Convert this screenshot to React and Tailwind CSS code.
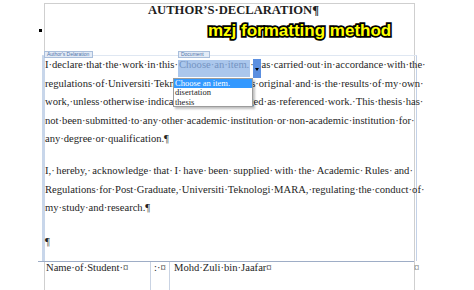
import React from "react";

function words(t) {
  return t.match(/·?[^·]+·?/g);
}

function JLine({ text }) {
  return (
    <div className="flex justify-between whitespace-pre">
      {words(text).map((p, i) => (
        <span key={i}>{p}</span>
      ))}
    </div>
  );
}

function Control() {
  return (
    <span className="relative px-[1px]">
      <span className="absolute left-0 right-0 top-[4px] h-[17px] bg-[#abc7ec]" />
      <span className="absolute left-0 top-[-5px] h-[7px] w-[32px] border border-[#a9bedb] bg-[#e3ebf6] font-['Liberation_Sans',sans-serif] text-[5px] leading-[5px] text-[#4f73aa] pl-[2px]">
        Document
      </span>
      <span className="relative text-[#7594c2]">Choose·an·item.</span>
      <span className="absolute left-[calc(100%+3px)] top-[3px] w-[8px] h-[19px] bg-[#5b8fe0] flex items-center justify-center">
        <span className="block w-0 h-0 border-l-[2.5px] border-r-[2.5px] border-t-[3px] border-l-transparent border-r-transparent border-t-black mt-[1px]" />
      </span>
    </span>
  );
}

export default function App() {
  const l1a = "I·declare·that·the·work·in·this·";
  const l1b = ["·was·", "carried·", "out·", "in·", "accordance·", "with·", "the·"];
  return (
    <div className="relative w-[474px] h-[290px] overflow-hidden bg-white font-['Liberation_Serif',serif] text-[#1e1e1e]">
      <div className="ml-[44px] mt-[3px] w-[371px] h-[287px] border-l border-t border-r border-[#cfcfcf] flex flex-col">
        <div className="h-[12px] leading-[12px] text-[12.6px] font-bold pl-[103px] whitespace-pre">
          AUTHOR’S·DECLARATION¶
        </div>
        <div className="h-[39px] pt-[13px]">
          <div className="-ml-[6px] w-[3px] h-[3px] bg-black" />
        </div>

        <div className="relative -ml-[3px] -mr-[3px] pr-[3px] h-[206px] border-l-[3px] border-l-[#c8d6ea] border-t border-t-[#dfe7f2] border-r border-r-[#c3d1e7] text-[10.6px] leading-[18.6px]">
          <span className="absolute left-[-1px] top-[-5px] h-[7px] w-[49px] border border-[#a9bedb] bg-[#e3ebf6] font-['Liberation_Sans',sans-serif] text-[5px] leading-[5px] text-[#4f73aa] pl-[2px] whitespace-nowrap">
            Author's Delaration
          </span>

          <div className="mb-[13px]">
            <div className="flex justify-between whitespace-pre">
              <span>{l1a}</span>
              <Control />
              {l1b.map((w, i) => (
                <span key={i}>{w}</span>
              ))}
            </div>
            <JLine text="regulations·of·Universiti·Teknologi·MARA.·It·is·original·and·is·the·results·of·my·own·" />
            <JLine text="work,·unless·otherwise·indicated·or·acknowledged·as·referenced·work.·This·thesis·has·" />
            <JLine text="not·been·submitted·to·any·other·academic·institution·or·non-academic·institution·for·" />
            <div className="whitespace-pre">any·degree·or·qualification.¶</div>
          </div>

          <div className="mb-[15px]">
            <JLine text="I,·hereby,·acknowledge·that·I·have·been·supplied·with·the·Academic·Rules·and·" />
            <JLine text="Regulations·for·Post·Graduate,·Universiti·Teknologi·MARA,·regulating·the·conduct·of·" />
            <div className="whitespace-pre">my·study·and·research.¶</div>
          </div>

          <div>¶</div>
        </div>

        <div className="-ml-[7px] w-[376px] flex-1 flex border-t border-[#9eadc6] text-[10.6px] leading-[11px] whitespace-pre">
          <div className="w-[112px] pl-[8px]">Name·of·Student·¤</div>
          <div className="w-[20px] border-l border-r border-[#c9d3e3] pl-[3px]">:·¤</div>
          <div className="flex-1 pl-[4px]">Mohd·Zuli·bin·Jaafar¤</div>
          <div className="w-0 overflow-visible text-[#666]">¤</div>
        </div>
      </div>

      <div className="absolute left-[208px] top-[22px] font-['Liberation_Sans',sans-serif] font-bold text-[17px] leading-[17px] text-[#ffff00] whitespace-nowrap [-webkit-text-stroke:3.5px_#000] [paint-order:stroke_fill]">
        mzj formatting method
      </div>

      <div className="absolute left-[173px] top-[78px] w-[80px] h-[29px] border border-[#9c9c9c] bg-white shadow-[2px_2px_2px_rgba(0,0,0,0.25)] text-[8.5px] leading-[9.4px] whitespace-nowrap">
        <div className="bg-[#3399ff] text-white pl-[1px]">Choose an item.</div>
        <div className="pl-[1px]">disertation</div>
        <div className="pl-[1px]">thesis</div>
      </div>
    </div>
  );
}
